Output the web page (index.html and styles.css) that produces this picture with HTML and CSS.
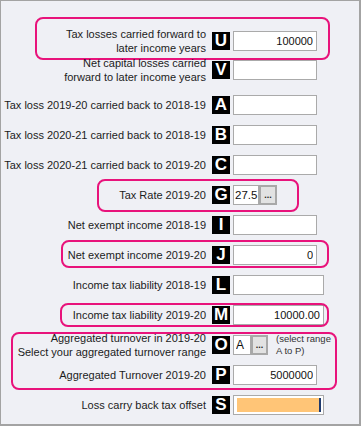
FILE: index.html
```html
<!DOCTYPE html>
<html lang="en">
<head>
    <meta charset="UTF-8">
    <meta name="viewport" content="width=device-width, initial-scale=1.0">
    <title>Losses schedule</title>
    <link rel="stylesheet" href="styles.css">
</head>
<body>
    <div class="panel">
        <div class="row row-u hl">
            <div class="label">Tax losses carried forward to<br>later income years</div>
            <span class="code">U</span>
            <input class="field" type="text" value="100000">
        </div>
        <div class="row row-v">
            <div class="label">Net capital losses carried<br>forward to later income years</div>
            <span class="code">V</span>
            <input class="field" type="text" value="">
        </div>
        <div class="row row-a">
            <div class="label">Tax loss 2019-20 carried back to 2018-19</div>
            <span class="code">A</span>
            <input class="field" type="text" value="">
        </div>
        <div class="row">
            <div class="label">Tax loss 2020-21 carried back to 2018-19</div>
            <span class="code">B</span>
            <input class="field" type="text" value="">
        </div>
        <div class="row">
            <div class="label">Tax loss 2020-21 carried back to 2019-20</div>
            <span class="code">C</span>
            <input class="field" type="text" value="">
        </div>
        <div class="row row-g hl">
            <div class="label">Tax Rate 2019-20</div>
            <span class="code">G</span>
            <div class="combo">
                <input class="field field-rate" type="text" value="27.5">
                <button class="more">...</button>
            </div>
        </div>
        <div class="row">
            <div class="label">Net exempt income 2018-19</div>
            <span class="code">I</span>
            <input class="field" type="text" value="">
        </div>
        <div class="row row-j hl">
            <div class="label">Net exempt income 2019-20</div>
            <span class="code">J</span>
            <input class="field" type="text" value="0">
        </div>
        <div class="row">
            <div class="label">Income tax liability 2018-19</div>
            <span class="code">L</span>
            <input class="field field-wide" type="text" value="">
        </div>
        <div class="row row-m hl">
            <div class="label">Income tax liability 2019-20</div>
            <span class="code">M</span>
            <input class="field field-wide" type="text" value="10000.00">
        </div>
        <div class="group hl">
            <div class="row">
                <div class="label">Aggregated turnover in 2019-20<br>Select your aggregated turnover range</div>
                <span class="code">O</span>
                <div class="combo">
                    <input class="field field-range" type="text" value="A">
                    <button class="more more-range">...</button>
                </div>
                <div class="hint">(select range<br>A to P)</div>
            </div>
            <div class="row">
                <div class="label">Aggregated Turnover 2019-20</div>
                <span class="code">P</span>
                <input class="field" type="text" value="5000000">
            </div>
        </div>
        <div class="row">
            <div class="label">Loss carry back tax offset</div>
            <span class="code">S</span>
            <div class="field field-wide field-calc"><span class="calc-fill"></span></div>
        </div>
    </div>
</body>
</html>
```

FILE: styles.css
```css
body {
    margin: 0;
    font-family: "Liberation Sans", Arial, sans-serif;
    background-color: #eff0f5;
}

.panel {
    width: 361px;
    height: 426px;
    box-sizing: border-box;
    padding-top: 25px;
    background-color: #eff0f5;
    border-top: 1px solid #a3a3a3;
    border-left: 1px solid #a3a3a3;
    border-right: 2px solid #a3a3a3;
    border-bottom: 2px solid #a3a3a3;
    overflow: hidden;
}

.row {
    display: flex;
    align-items: center;
    height: 30px;
    position: relative;
}

.row-v {
    height: 28px;
}

.row-a {
    margin-top: 6px;
}

.label {
    width: 205px;
    flex-shrink: 0;
    text-align: right;
    font-size: 11px;
    line-height: 14px;
    color: #1c1c1c;
    white-space: nowrap;
}

.code {
    width: 18px;
    height: 18px;
    margin: 0 3px 0 6px;
    flex-shrink: 0;
    background-color: #000;
    color: #fff;
    font-size: 17px;
    font-weight: bold;
    line-height: 18px;
    text-align: center;
}

.field {
    width: 84px;
    height: 20px;
    box-sizing: border-box;
    margin: 0;
    padding: 0 3px;
    border: 1px solid #aaaaaa;
    background-color: #fff;
    font-family: "Liberation Sans", Arial, sans-serif;
    font-size: 11px;
    color: #111;
    text-align: right;
    outline: none;
}

.field-wide {
    width: 91px;
}

/* combo boxes with the ... picker */
.combo {
    display: flex;
    height: 20px;
}

.field-rate {
    width: 26px;
    padding: 0 0 0 1px;
    font-size: 11.5px;
    text-align: left;
}

.field-range {
    width: 18px;
    padding: 0 0 0 2px;
    font-size: 12px;
    text-align: left;
}

.more {
    width: 18px;
    height: 20px;
    margin: 0;
    padding: 0 0 4px;
    border: 2px solid #a8a8a8;
    background-color: #e2e2e2;
    font-family: "Liberation Sans", Arial, sans-serif;
    font-size: 9px;
    font-weight: bold;
    line-height: 8px;
    color: #222;
    display: flex;
    align-items: flex-end;
    justify-content: center;
}

.more-range {
    width: 17px;
}

.hint {
    margin-left: 8px;
    font-size: 9.5px;
    line-height: 12px;
    color: #333;
    white-space: nowrap;
}

.field-calc {
    padding: 2px 2px 2px 3px;
    display: flex;
}

.calc-fill {
    flex: 1;
    background-color: #ffc577;
    border-right: 2px solid #1f3a6e;
}

/* pink highlight outlines */
.group {
    position: relative;
}

.hl::before {
    content: "";
    position: absolute;
    border: 2px solid #e8137b;
    border-radius: 8px;
    pointer-events: none;
}

.row-u::before {
    top: -9px;
    bottom: -4px;
    left: 34px;
    right: 29px;
}

.row-g::before {
    top: -1px;
    bottom: -2px;
    left: 96px;
    right: 60px;
}

.row-j::before {
    top: 0;
    bottom: 2px;
    left: 60px;
    right: 30px;
}

.row-m::before {
    top: 3px;
    bottom: 3px;
    left: 59px;
    right: 30px;
}

.group::before {
    top: 2px;
    bottom: 0;
    left: 10px;
    right: 22px;
}
```
